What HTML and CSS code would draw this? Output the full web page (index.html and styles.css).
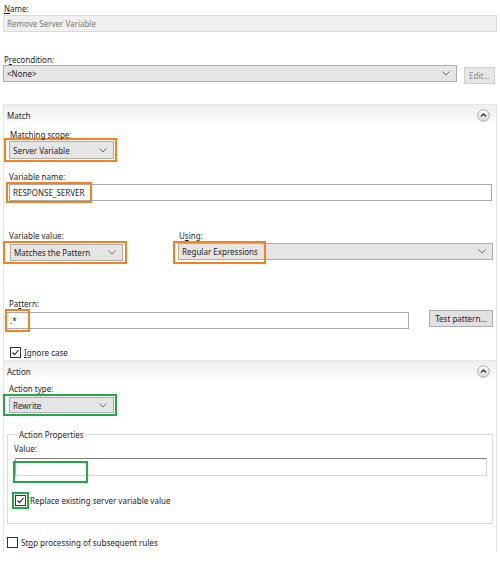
FILE: index.html
```html
<!DOCTYPE html>
<html lang="en">
<head>
    <meta charset="UTF-8">
    <meta name="viewport" content="width=device-width, initial-scale=1.0">
    <title>Edit Rule - Remove Server Variable</title>
    <link rel="stylesheet" href="styles.css">
</head>
<body>
    <div class="dialog">
        <div class="top">
            <div class="lbl name-lbl"><u>N</u>ame:</div>
            <input class="txt readonly name-input" value="Remove Server Variable" readonly>

            <div class="lbl pre-lbl">P<u>r</u>econdition:</div>
            <div class="pre-row">
                <div class="select pre-select">
                    <span>&lt;None&gt;</span>
                    <svg class="chev" width="8" height="5" viewBox="0 0 8 5"><polyline points="0.5,0.5 4,4 7.5,0.5" fill="none" stroke="#6a6a6a" stroke-width="1"/></svg>
                </div>
                <button class="btn disabled edit-btn">Edit...</button>
            </div>
        </div>

        <section class="panel match-panel">
            <div class="panel-head">
                <span>Match</span>
                <svg class="collapse" width="13" height="13" viewBox="0 0 13 13">
                    <defs>
                        <linearGradient id="cg1" x1="0" y1="0" x2="0" y2="1">
                            <stop offset="0" stop-color="#fdfdfd"/>
                            <stop offset="1" stop-color="#d9d9d9"/>
                        </linearGradient>
                    </defs>
                    <circle cx="6.5" cy="6.5" r="5.8" fill="url(#cg1)" stroke="#9c9c9c" stroke-width="0.8"/>
                    <polyline points="4,7.6 6.5,5.1 9,7.6" fill="none" stroke="#333" stroke-width="1.4"/>
                </svg>
            </div>

            <div class="lbl scope-lbl">Matching scope:</div>
            <div class="hl orange scope-hl">
                <div class="select scope-select">
                    <span>Server Variable</span>
                    <svg class="chev" width="8" height="5" viewBox="0 0 8 5"><polyline points="0.5,0.5 4,4 7.5,0.5" fill="none" stroke="#6a6a6a" stroke-width="1"/></svg>
                </div>
            </div>

            <div class="lbl varname-lbl">Variable name:</div>
            <div class="field varname-field">
                <input class="txt varname-input" value="RESPONSE_SERVER">
                <div class="mark orange varname-mark"></div>
            </div>

            <div class="value-row">
                <div class="value-col">
                    <div class="lbl value-lbl">Variable value:</div>
                    <div class="hl orange value-hl">
                        <div class="select value-select">
                            <span>Matches the Pattern</span>
                            <svg class="chev" width="8" height="5" viewBox="0 0 8 5"><polyline points="0.5,0.5 4,4 7.5,0.5" fill="none" stroke="#6a6a6a" stroke-width="1"/></svg>
                        </div>
                    </div>
                </div>
                <div class="using-col">
                    <div class="lbl using-lbl">U<u>s</u>ing:</div>
                    <div class="field using-field">
                        <div class="select using-select">
                            <span>Regular Expressions</span>
                            <svg class="chev" width="8" height="5" viewBox="0 0 8 5"><polyline points="0.5,0.5 4,4 7.5,0.5" fill="none" stroke="#6a6a6a" stroke-width="1"/></svg>
                        </div>
                        <div class="mark orange using-mark"></div>
                    </div>
                </div>
            </div>

            <div class="lbl pattern-lbl">Pa<u>t</u>tern:</div>
            <div class="pattern-row">
                <div class="field pattern-field">
                    <input class="txt pattern-input" value=".*">
                    <div class="mark orange pattern-mark"></div>
                </div>
                <button class="btn test-btn">Test pattern...</button>
            </div>

            <label class="check-row ignore-row">
                <span class="box checked">
                    <svg width="9" height="9" viewBox="0 0 9 9"><polyline points="1.5,4.5 3.6,6.6 7.6,2" fill="none" stroke="#222" stroke-width="1.1"/></svg>
                </span>
                <span><u>I</u>gnore case</span>
            </label>
        </section>

        <section class="panel action-panel">
            <div class="panel-head">
                <span>Action</span>
                <svg class="collapse" width="13" height="13" viewBox="0 0 13 13">
                    <defs>
                        <linearGradient id="cg2" x1="0" y1="0" x2="0" y2="1">
                            <stop offset="0" stop-color="#fdfdfd"/>
                            <stop offset="1" stop-color="#d9d9d9"/>
                        </linearGradient>
                    </defs>
                    <circle cx="6.5" cy="6.5" r="5.8" fill="url(#cg2)" stroke="#9c9c9c" stroke-width="0.8"/>
                    <polyline points="4,7.6 6.5,5.1 9,7.6" fill="none" stroke="#333" stroke-width="1.4"/>
                </svg>
            </div>

            <div class="lbl type-lbl">Action type:</div>
            <div class="hl green type-hl">
                <div class="select type-select">
                    <span>Rewrite</span>
                    <svg class="chev" width="8" height="5" viewBox="0 0 8 5"><polyline points="0.5,0.5 4,4 7.5,0.5" fill="none" stroke="#6a6a6a" stroke-width="1"/></svg>
                </div>
            </div>

            <fieldset class="props">
                <legend>Action Properties</legend>
                <div class="lbl prop-value-lbl">Value:</div>
                <div class="field prop-value-field">
                    <input class="txt prop-value-input" value="">
                    <div class="mark green prop-value-mark"></div>
                </div>
                <label class="check-row replace-row">
                    <span class="hl green replace-hl">
                        <span class="box checked">
                            <svg width="9" height="9" viewBox="0 0 9 9"><polyline points="1.5,4.5 3.6,6.6 7.6,2" fill="none" stroke="#222" stroke-width="1.1"/></svg>
                        </span>
                    </span>
                    <span>Replace existing server variable value</span>
                </label>
            </fieldset>

            <label class="check-row stop-row">
                <span class="box"></span>
                <span>St<u>o</u>p processing of subsequent rules</span>
            </label>
        </section>
    </div>
</body>
</html>
```

FILE: styles.css
```css
body {
    margin: 0;
    background: #fff;
    font-family: "Noto Sans", "Open Sans", sans-serif;
    font-size: 8px;
    line-height: 11px;
    color: #1e1e1e;
}
.dialog {
    width: 500px;
    padding-top: 3px;
}
u {
    text-decoration-thickness: 1px;
    text-underline-offset: 1px;
}
.lbl {
    height: 11px;
}

/* text boxes, selects, buttons */
.txt {
    display: block;
    box-sizing: border-box;
    height: 17px;
    margin: 0;
    padding: 0 3px;
    border: 1px solid #a9a9a9;
    border-radius: 0;
    font: inherit;
    color: #1e1e1e;
    background: #fff;
    outline: none;
}
.txt.readonly {
    background: #f0f0f0;
    border-color: #dadada;
    color: #777;
}
.select {
    box-sizing: border-box;
    height: 17px;
    display: flex;
    align-items: center;
    justify-content: space-between;
    padding: 0 6px 0 3px;
    background: #e5e5e5;
    border: 1px solid #adadad;
}
.chev {
    display: block;
}
.btn {
    box-sizing: border-box;
    height: 17px;
    padding: 0 4px;
    border: 1px solid #adadad;
    background: #e1e1e1;
    font: inherit;
    color: #1e1e1e;
    border-radius: 0;
}
.btn.disabled {
    color: #8a8a8a;
    border-color: #cfcfcf;
    background: #e6e6e6;
}

/* annotation boxes */
.hl {
    box-sizing: border-box;
    border: 2px solid;
}
.field {
    position: relative;
}
.mark {
    position: absolute;
    box-sizing: border-box;
    border: 2px solid;
}
.orange {
    border-color: #f5811f;
}
.green {
    border-color: #22a845;
}

/* top fields */
.top {
    padding: 0 3px;
}
.name-lbl {
    padding-left: 1px;
}
.name-input {
    width: 494px;
    margin-top: 1px;
}
.pre-lbl {
    margin-top: 22px;
    padding-left: 1px;
}
.pre-row {
    display: flex;
    align-items: flex-start;
    gap: 7px;
    height: 17px;
}
.pre-select {
    width: 454px;
}
.edit-btn {
    width: 31px;
    margin-top: 2px;
}

/* collapsible panels */
.panel {
    margin: 0 3px;
    border-left: 1px solid #e4e4e4;
    border-right: 1px solid #e4e4e4;
}
.match-panel {
    margin-top: 22px;
}
.panel-head {
    box-sizing: border-box;
    height: 21px;
    display: flex;
    align-items: flex-start;
    justify-content: space-between;
    padding: 5px 6px 0 3px;
    border-top: 1px solid #e6e6e6;
    background: linear-gradient(#efefef, #f9f9f9 70%, #fff);
}
.collapse {
    margin-top: -1px;
}

.scope-lbl {
    margin-top: 4px;
    padding-left: 6px;
}
.scope-hl {
    width: 113px;
    margin-top: -2px;
    padding: 1px 1px 1px 3px;
}
.scope-select {
    height: 18px;
}

.varname-lbl {
    margin-top: 9px;
    padding-left: 5px;
}
.varname-field {
    margin: 2px 4px 0 5px;
}
.varname-input {
    width: 100%;
}
.varname-mark {
    left: -3px;
    top: -2px;
    width: 86px;
    height: 21px;
}

.value-row {
    display: flex;
    margin-top: 29px;
}
.value-col {
    width: 124px;
}
.value-lbl {
    padding-left: 5px;
}
.value-hl {
    width: 124px;
    margin-left: -1px;
    padding: 1px 2px 1px 5px;
}
.value-select {
    height: 17px;
}
.using-col {
    flex: 1;
    margin-left: 46px;
    margin-right: 3px;
}
.using-lbl {
    padding-left: 5px;
}
.using-field {
    margin-top: 2px;
    margin-left: 4px;
}
.using-mark {
    left: -5px;
    top: -2px;
    width: 93px;
    height: 23px;
}

.pattern-lbl {
    margin-top: 34px;
    padding-left: 5px;
}
.pattern-row {
    display: flex;
    align-items: flex-start;
    margin-top: 1px;
    padding-left: 2px;
}
.pattern-field {
    margin-top: 2px;
}
.pattern-input {
    width: 403px;
}
.pattern-mark {
    left: -1px;
    top: -3px;
    width: 25px;
    height: 23px;
}
.test-btn {
    width: 64px;
    margin-left: 20px;
}

/* checkboxes */
.check-row {
    display: flex;
    align-items: center;
    gap: 3px;
}
.box {
    box-sizing: border-box;
    width: 11px;
    height: 11px;
    display: flex;
    align-items: center;
    justify-content: center;
    border: 1px solid #333;
    background: #fff;
}
.ignore-row {
    margin-top: 18px;
    padding-left: 6px;
    padding-bottom: 2px;
}

/* action panel */
.type-lbl {
    margin-top: 2px;
    padding-left: 5px;
}
.type-hl {
    width: 114px;
    margin-left: -1px;
    padding: 1px 1px 1px 4px;
}
.type-select {
    height: 16px;
}
.props {
    margin: 13px 3px 0 3px;
    padding: 3px 5px 14px 6px;
    border: 1px solid #dcdcdc;
}
.props legend {
    padding: 0 1px;
    margin-left: 4px;
    line-height: 11px;
}
.prop-value-field {
    margin-top: 4px;
    margin-left: 1px;
}
.prop-value-input {
    height: 18px;
    width: 100%;
    border-color: #7c7c7c #d4d4d4 #d4d4d4 #a9a9a9;
}
.prop-value-mark {
    left: -2px;
    top: 3px;
    width: 75px;
    height: 22px;
}
.replace-row {
    margin-top: 16px;
    margin-left: -2px;
    gap: 1px;
}
.replace-hl {
    display: block;
    padding: 1px;
}
.stop-row {
    margin-top: 13px;
    padding-left: 3px;
    padding-bottom: 4px;
}
```
